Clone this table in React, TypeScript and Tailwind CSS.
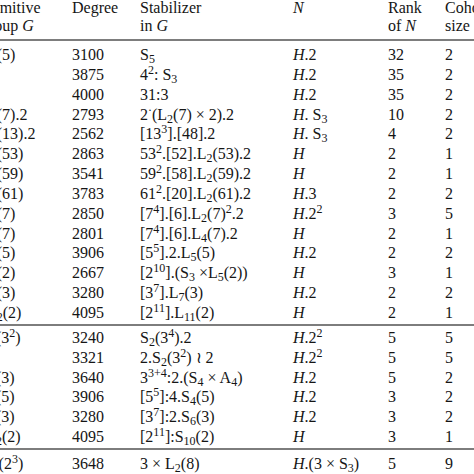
import React from 'react'

type Row = [React.ReactNode, string, React.ReactNode, React.ReactNode, string, string]

const H = () => <i>H</i>

const section1: Row[] = [
    [<>L<sub>3</sub>(5)</>, '3100', <>S<sub>5</sub></>, <><H />.2</>, '32', '2'],
    ['', '3875', <>4<sup>2</sup>: S<sub>3</sub></>, <><H />.2</>, '35', '2'],
    ['', '4000', '31:3', <><H />.2</>, '35', '2'],
    [<>L<sub>3</sub>(7).2</>, '2793', <>2<sup>·</sup>(L<sub>2</sub>(7) × 2).2</>, <><H />. S<sub>3</sub></>, '10', '2'],
    [<>L<sub>3</sub>(13).2</>, '2562', <>[13<sup>3</sup>].[48].2</>, <><H />. S<sub>3</sub></>, '4', '2'],
    [<>L<sub>3</sub>(53)</>, '2863', <>53<sup>2</sup>.[52].L<sub>2</sub>(53).2</>, <H />, '2', '1'],
    [<>L<sub>3</sub>(59)</>, '3541', <>59<sup>2</sup>.[58].L<sub>2</sub>(59).2</>, <H />, '2', '1'],
    [<>L<sub>3</sub>(61)</>, '3783', <>61<sup>2</sup>.[20].L<sub>2</sub>(61).2</>, <><H />.3</>, '2', '2'],
    [<>L<sub>4</sub>(7)</>, '2850', <>[7<sup>4</sup>].[6].L<sub>2</sub>(7)<sup>2</sup>.2</>, <><H />.2<sup>2</sup></>, '3', '5'],
    [<>L<sub>5</sub>(7)</>, '2801', <>[7<sup>4</sup>].[6].L<sub>4</sub>(7).2</>, <H />, '2', '1'],
    [<>L<sub>6</sub>(5)</>, '3906', <>[5<sup>5</sup>].2.L<sub>5</sub>(5)</>, <><H />.2</>, '2', '2'],
    [<>L<sub>7</sub>(2)</>, '2667', <>[2<sup>10</sup>].(S<sub>3</sub> ×L<sub>5</sub>(2))</>, <H />, '3', '1'],
    [<>L<sub>8</sub>(3)</>, '3280', <>[3<sup>7</sup>].L<sub>7</sub>(3)</>, <><H />.2</>, '2', '2'],
    [<>L<sub>12</sub>(2)</>, '4095', <>[2<sup>11</sup>].L<sub>11</sub>(2)</>, <H />, '2', '1'],
]

const section2: Row[] = [
    [<>S<sub>4</sub>(3<sup>2</sup>)</>, '3240', <>S<sub>2</sub>(3<sup>4</sup>).2</>, <><H />.2<sup>2</sup></>, '5', '5'],
    ['', '3321', <>2.S<sub>2</sub>(3<sup>2</sup>) ≀ 2</>, <><H />.2<sup>2</sup></>, '5', '5'],
    [<>S<sub>6</sub>(3)</>, '3640', <>3<sup>3+4</sup>:2.(S<sub>4</sub> × A<sub>4</sub>)</>, <><H />.2</>, '5', '2'],
    [<>S<sub>6</sub>(5)</>, '3906', <>[5<sup>5</sup>]:4.S<sub>4</sub>(5)</>, <><H />.2</>, '3', '2'],
    [<>S<sub>8</sub>(3)</>, '3280', <>[3<sup>7</sup>]:2.S<sub>6</sub>(3)</>, <><H />.2</>, '3', '2'],
    [<>S<sub>12</sub>(2)</>, '4095', <>[2<sup>11</sup>]:S<sub>10</sub>(2)</>, <H />, '3', '1'],
]

const section3: Row[] = [
    [<>U<sub>3</sub>(2<sup>3</sup>)</>, '3648', <>3 × L<sub>2</sub>(8)</>, <><H />.(3 × S<sub>3</sub>)</>, '5', '9'],
]

const cols = 'grid grid-cols-[91px_68px_153px_95px_57px_95px] whitespace-nowrap'

const Rows = ({ rows }: { rows: Row[] }) => (
    <div>
        {rows.map((r, i) => (
            <div key={i} className={cols + ' h-[19.85px] leading-[19.85px]'}>
                {r.map((c, j) => <div key={j}>{c}</div>)}
            </div>
        ))}
    </div>
)

export default function App() {
    return (
        <div className="h-[474px] w-[474px] overflow-hidden bg-white">
            <div className="-ml-[19px] -mt-[1px] w-[560px] font-['Liberation_Serif',serif] text-[16px] text-[#151515]">
                <div className="pb-[4px] leading-[18px]">
                    <div className={cols}>
                        <div>Primitive</div>
                        <div>Degree</div>
                        <div>Stabilizer</div>
                        <div><i>N</i></div>
                        <div>Rank</div>
                        <div>Cohort</div>
                    </div>
                    <div className={cols}>
                        <div>group <i>G</i></div>
                        <div></div>
                        <div>in <i>G</i></div>
                        <div></div>
                        <div>of <i>N</i></div>
                        <div>size</div>
                    </div>
                </div>
                <div className="h-[2px] bg-[#7d7d7d]" />
                <div className="pt-[4px]">
                    <Rows rows={section1} />
                </div>
                <div className="mt-[1px] h-[2px] bg-[#7d7d7d]" />
                <div className="pt-[2px]">
                    <Rows rows={section2} />
                </div>
                <div className="mt-[1px] h-[2px] bg-[#7d7d7d]" />
                <div className="pt-[4px]">
                    <Rows rows={section3} />
                </div>
            </div>
        </div>
    )
}
